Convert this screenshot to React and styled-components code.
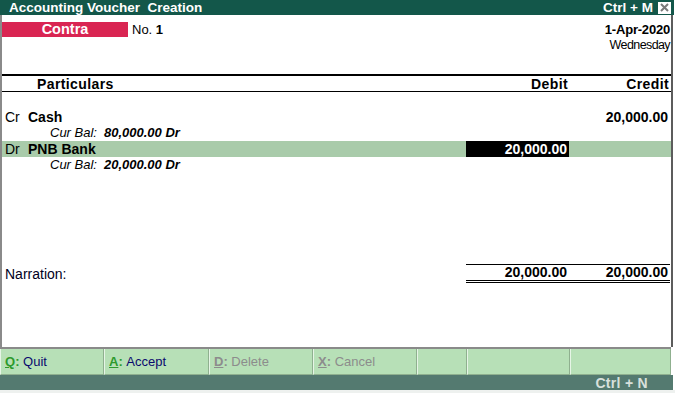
import React from "react";
import styled, { createGlobalStyle } from "styled-components";

const GlobalStyle = createGlobalStyle`
  html, body {
    margin: 0;
    padding: 0;
    background: #ffffff;
  }
  body {
    font-family: "Liberation Sans", Arial, sans-serif;
    font-size: 12px;
    color: #000022;
  }
`;

const entries = [
  { type: "Cr", ledger: "Cash", balance: "80,000.00 Dr", debit: "", credit: "20,000.00" },
  { type: "Dr", ledger: "PNB Bank", balance: "20,000.00 Dr", debit: "20,000.00", credit: "", active: true },
];

const buttons = [
  { key: "Q", label: "Quit", width: 104 },
  { key: "A", label: "Accept", width: 105 },
  { key: "D", label: "Delete", width: 104, disabled: true },
  { key: "X", label: "Cancel", width: 104, disabled: true },
  { width: 50 },
  { width: 103 },
  { width: 101 },
];

const App = () => {
  return (
    <>
      <GlobalStyle />
      <Screen>
        <TitleBar>
          <Title>Accounting Voucher&nbsp; Creation</Title>
          <Shortcut>Ctrl + M</Shortcut>
          <CloseBox>
            <svg width="11" height="11" viewBox="0 0 11 11">
              <path d="M2 2 L9 9 M9 2 L2 9" stroke="#7a7a7a" strokeWidth="2" />
            </svg>
          </CloseBox>
        </TitleBar>

        <Body>
          <VoucherHead>
            <TypeRow>
              <VoucherType>Contra</VoucherType>
              <VoucherNo>
                No. <b>1</b>
              </VoucherNo>
            </TypeRow>
            <DateBlock>
              <DateText>1-Apr-2020</DateText>
              <DayText>Wednesday</DayText>
            </DateBlock>
          </VoucherHead>

          <HeaderRow>
            <HeadCell>Particulars</HeadCell>
            <HeadAmount>Debit</HeadAmount>
            <HeadAmount>Credit</HeadAmount>
          </HeaderRow>

          <Entries>
            {entries.map((e) => (
              <React.Fragment key={e.ledger}>
                <EntryRow $active={e.active}>
                  <Particular>
                    <DrCr>{e.type}</DrCr>
                    <Ledger>{e.ledger}</Ledger>
                  </Particular>
                  <Amount $focus={e.active}>{e.debit}</Amount>
                  <Amount>{e.credit}</Amount>
                </EntryRow>
                <BalanceRow>
                  <i>Cur Bal:</i>
                  <b>{e.balance}</b>
                </BalanceRow>
              </React.Fragment>
            ))}
          </Entries>

          <TotalRow>
            <Narration>Narration:</Narration>
            <TotalAmount>20,000.00</TotalAmount>
            <TotalAmount>20,000.00</TotalAmount>
          </TotalRow>
        </Body>

        <ButtonBar>
          {buttons.map((b, i) => (
            <KeyButton key={i} $disabled={b.disabled} style={{ width: b.width }}>
              {b.key && (
                <>
                  <HotKey $disabled={b.disabled}>{b.key}</HotKey>
                  <Colon $disabled={b.disabled}>:</Colon>&nbsp;{b.label}
                </>
              )}
            </KeyButton>
          ))}
        </ButtonBar>

        <StatusBar>
          <StatusText>Ctrl + N</StatusText>
        </StatusBar>
        <BottomStrip />
      </Screen>
    </>
  );
};

export default App;

const Screen = styled.div`
  width: 675px;
  height: 393px;
  display: flex;
  flex-direction: column;
  background: #ffffff;
  overflow: hidden;
`;

const TitleBar = styled.div`
  height: 15px;
  display: flex;
  align-items: center;
  background: #13574a;
  color: #ffffff;
  font-weight: bold;
  font-size: 13.5px;
  padding: 0 3px 0 9px;
  margin-right: 1px;
`;

const Title = styled.div`
  flex: 1;
  line-height: 15px;
`;

const Shortcut = styled.div`
  margin-right: 5px;
  line-height: 15px;
`;

const CloseBox = styled.div`
  width: 13px;
  height: 12px;
  background: #ffffff;
  display: flex;
  align-items: center;
  justify-content: center;
`;

const Body = styled.div`
  flex: 1;
  display: flex;
  flex-direction: column;
  border-left: 2px solid #8a8a8a;
  border-right: 2px solid #5c5c5c;
  margin-right: 2px;
`;

const VoucherHead = styled.div`
  display: flex;
  justify-content: space-between;
  padding-top: 7px;
  height: 52px;
`;

const TypeRow = styled.div`
  display: flex;
  align-items: center;
  height: 15px;
`;

const VoucherType = styled.div`
  width: 126px;
  height: 15px;
  background: #d92552;
  color: #ffffff;
  font-weight: bold;
  font-size: 14.5px;
  line-height: 15px;
  text-align: center;
`;

const VoucherNo = styled.div`
  margin-left: 4px;
  font-size: 13px;
  color: #000000;
`;

const DateBlock = styled.div`
  text-align: right;
  padding-right: 1px;
`;

const DateText = styled.div`
  font-weight: bold;
  font-size: 13px;
  line-height: 15px;
  letter-spacing: -0.2px;
  color: #000000;
`;

const DayText = styled.div`
  font-family: "Liberation Sans Narrow", "Liberation Sans", Arial, sans-serif;
  font-size: 12.5px;
  line-height: 17px;
  letter-spacing: -0.6px;
  color: #000000;
`;

const HeaderRow = styled.div`
  display: grid;
  grid-template-columns: 464px 103px 101px;
  border-top: 2px solid #000000;
  border-bottom: 1px solid #000000;
  height: 15px;
  align-items: center;
  font-weight: bold;
  font-size: 14px;
  letter-spacing: 0.4px;
  color: #000000;
`;

const HeadCell = styled.div`
  padding-left: 35px;
`;

const HeadAmount = styled.div`
  text-align: right;
  padding-right: 1px;
`;

const Entries = styled.div`
  padding-top: 17px;
  flex: 1;
`;

const EntryRow = styled.div`
  display: grid;
  grid-template-columns: 464px 103px 101px;
  height: 16px;
  align-items: stretch;
  background: ${(p) => (p.$active ? "#a9cbaa" : "transparent")};
`;

const Particular = styled.div`
  display: flex;
  align-items: center;
  padding-left: 3px;
  font-size: 14px;
  color: #000000;
`;

const DrCr = styled.span`
  width: 23px;
`;

const Ledger = styled.span`
  font-weight: bold;
`;

const Amount = styled.div`
  display: flex;
  align-items: center;
  justify-content: flex-end;
  padding-right: 2px;
  font-weight: bold;
  font-size: 14px;
  background: ${(p) => (p.$focus ? "#000000" : "transparent")};
  color: ${(p) => (p.$focus ? "#ffffff" : "#000000")};
`;

const BalanceRow = styled.div`
  height: 16px;
  line-height: 16px;
  padding-left: 48px;
  font-size: 13px;
  color: #000000;
  i {
    margin-right: 7px;
  }
  b {
    font-style: italic;
  }
`;

const TotalRow = styled.div`
  display: grid;
  grid-template-columns: 464px 103px 101px;
  align-items: center;
  height: 18px;
  margin-bottom: 65px;
`;

const Narration = styled.div`
  padding-left: 3px;
  font-size: 14px;
  color: #000022;
`;

const TotalAmount = styled.div`
  text-align: right;
  padding-right: 2px;
  font-weight: bold;
  font-size: 14px;
  color: #000000;
  line-height: 15px;
  border-top: 1px solid #000000;
  border-bottom: 3px double #000000;
`;

const ButtonBar = styled.div`
  display: flex;
  height: 26px;
  border-top: 2px solid #8a8a8a;
  margin-right: 4px;
  background: #b7e0b7;
`;

const KeyButton = styled.div`
  display: flex;
  align-items: center;
  padding-left: 4px;
  box-sizing: border-box;
  border-left: 1px solid #e6f5e6;
  border-right: 1px solid #8fb08f;
  border-bottom: 1px solid #8fb08f;
  font-family: "Liberation Sans", Arial, sans-serif;
  font-size: 13px;
  color: ${(p) => (p.$disabled ? "#8c8c8c" : "#0a0a6e")};
`;

const HotKey = styled.span`
  font-weight: bold;
  text-decoration: underline;
  color: ${(p) => (p.$disabled ? "#8c8c8c" : "#2e9a2e")};
`;

const Colon = styled.span`
  font-weight: bold;
  color: ${(p) => (p.$disabled ? "#8c8c8c" : "#2e9a2e")};
`;

const StatusBar = styled.div`
  height: 15px;
  display: flex;
  justify-content: flex-end;
  align-items: center;
  background: #547a70;
  margin-right: 2px;
  padding-right: 25px;
`;

const StatusText = styled.div`
  font-weight: bold;
  font-size: 14px;
  letter-spacing: 0.3px;
  color: #d8e0dc;
`;

const BottomStrip = styled.div`
  height: 3px;
  background: #eef1ef;
`;
